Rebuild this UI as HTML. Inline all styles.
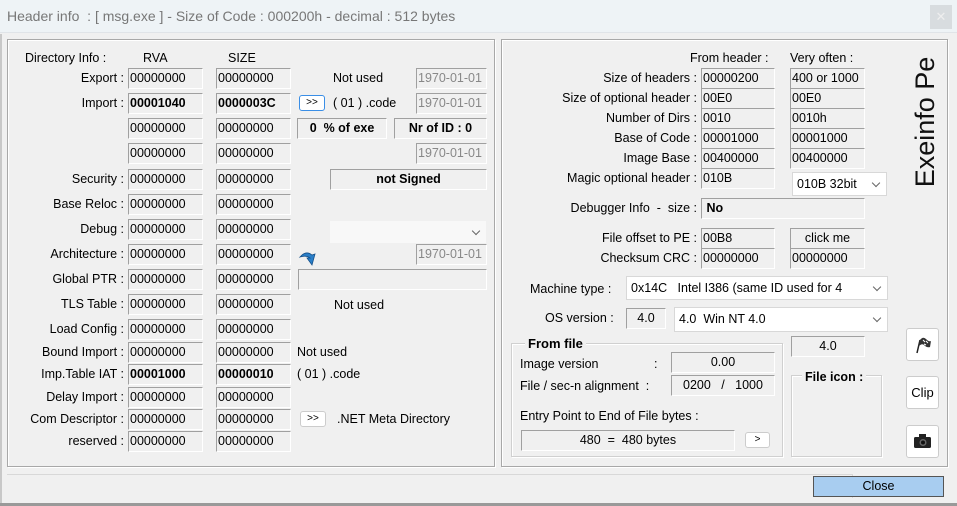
<!DOCTYPE html>
<html><head><meta charset="utf-8"><style>
*{margin:0;padding:0;box-sizing:border-box}
body{width:957px;height:506px;background:#f0f0f0;font-family:"Liberation Sans",sans-serif;font-size:12.5px;color:#000;position:relative;overflow:hidden}
.a{position:absolute;white-space:nowrap}
.f{position:absolute;border-top:1px solid #a0a0a0;border-left:1px solid #a0a0a0;border-right:1px solid #fff;border-bottom:1px solid #fff;height:21px;line-height:19px;padding-left:1px;white-space:nowrap;overflow:hidden}
.b{font-weight:bold}
.c{text-align:center;padding-left:0}
.g{color:#888}
.r{text-align:right}
.btn{position:absolute;background:#fff;border:1px solid #ccc;border-radius:3px;text-align:center}
.cb{position:absolute;background:#fff;border:1px solid #d8d8d8;height:24px;line-height:22px;padding-left:4px;white-space:nowrap;overflow:hidden}
.cb:after{content:"";position:absolute;right:7px;top:7px;width:5px;height:5px;border-right:1px solid #666;border-bottom:1px solid #666;transform:rotate(45deg)}
.grp{position:absolute;border:1px solid #d0d0d0;box-shadow:inset 1px 1px 0 #fff,1px 1px 0 #fff}
</style></head><body>
<div class="a" style="left:0;top:0;width:957px;height:33px;background:#eef3f6;border-bottom:1px solid #e0e4e8"></div>
<div class="a" style="left:7px;top:8px;font-size:14px;color:#777">Header info&nbsp; : [ msg.exe ] - Size of Code : 000200h - decimal : 512 bytes</div>
<div class="a" style="left:930px;top:5px;width:22px;height:24px;background:#d8dcdf;color:#eee;text-align:center;line-height:24px;font-size:13px">✕</div>
<div class="a" style="left:0;top:34px;width:2px;height:470px;background:#c8c8c8"></div>

<div class="grp" style="left:7px;top:39px;width:488px;height:428px;border-color:#a8a8a8"></div>
<div class="grp" style="left:501px;top:39px;width:447px;height:428px;border-color:#a8a8a8"></div>

<!-- left labels -->
<div class="a" style="left:25px;top:51px">Directory Info :</div>
<div class="a" style="left:143px;top:51px">RVA</div>
<div class="a" style="left:228px;top:51px">SIZE</div>
<div class="a r" style="left:0;width:124px;top:71px">Export :</div>
<div class="a r" style="left:0;width:124px;top:96px">Import :</div>
<div class="a r" style="left:0;width:124px;top:172px">Security :</div>
<div class="a r" style="left:0;width:124px;top:197px">Base Reloc :</div>
<div class="a r" style="left:0;width:124px;top:222px">Debug :</div>
<div class="a r" style="left:0;width:124px;top:247px">Architecture :</div>
<div class="a r" style="left:0;width:124px;top:272px">Global PTR :</div>
<div class="a r" style="left:0;width:124px;top:297px">TLS Table :</div>
<div class="a r" style="left:0;width:124px;top:322px">Load Config :</div>
<div class="a r" style="left:0;width:124px;top:345px">Bound Import :</div>
<div class="a r" style="left:0;width:124px;top:367px">Imp.Table IAT :</div>
<div class="a r" style="left:0;width:124px;top:390px">Delay Import :</div>
<div class="a r" style="left:0;width:124px;top:412px">Com Descriptor :</div>
<div class="a r" style="left:0;width:124px;top:434px">reserved :</div>

<div class="f" style="left:128px;top:68px;width:75px">00000000</div><div class="f" style="left:216px;top:68px;width:75px">00000000</div>
<div class="f b" style="left:128px;top:93px;width:75px">00001040</div><div class="f b" style="left:216px;top:93px;width:75px">0000003C</div>
<div class="f" style="left:128px;top:118px;width:75px">00000000</div><div class="f" style="left:216px;top:118px;width:75px">00000000</div>
<div class="f" style="left:128px;top:143px;width:75px">00000000</div><div class="f" style="left:216px;top:143px;width:75px">00000000</div>
<div class="f" style="left:128px;top:169px;width:75px">00000000</div><div class="f" style="left:216px;top:169px;width:75px">00000000</div>
<div class="f" style="left:128px;top:194px;width:75px">00000000</div><div class="f" style="left:216px;top:194px;width:75px">00000000</div>
<div class="f" style="left:128px;top:219px;width:75px">00000000</div><div class="f" style="left:216px;top:219px;width:75px">00000000</div>
<div class="f" style="left:128px;top:244px;width:75px">00000000</div><div class="f" style="left:216px;top:244px;width:75px">00000000</div>
<div class="f" style="left:128px;top:269px;width:75px">00000000</div><div class="f" style="left:216px;top:269px;width:75px">00000000</div>
<div class="f" style="left:128px;top:294px;width:75px">00000000</div><div class="f" style="left:216px;top:294px;width:75px">00000000</div>
<div class="f" style="left:128px;top:319px;width:75px">00000000</div><div class="f" style="left:216px;top:319px;width:75px">00000000</div>
<div class="f" style="left:128px;top:342px;width:75px">00000000</div><div class="f" style="left:216px;top:342px;width:75px">00000000</div>
<div class="f b" style="left:128px;top:364px;width:75px">00001000</div><div class="f b" style="left:216px;top:364px;width:75px">00000010</div>
<div class="f" style="left:128px;top:387px;width:75px">00000000</div><div class="f" style="left:216px;top:387px;width:75px">00000000</div>
<div class="f" style="left:128px;top:409px;width:75px">00000000</div><div class="f" style="left:216px;top:409px;width:75px">00000000</div>
<div class="f" style="left:128px;top:431px;width:75px">00000000</div><div class="f" style="left:216px;top:431px;width:75px">00000000</div>

<div class="a" style="left:333px;top:71px">Not used</div>
<div class="f g" style="left:416px;top:68px;width:71px">1970-01-01</div>
<div class="btn" style="left:299px;top:95px;width:26px;height:16px;border-color:#3a8ee6;font-size:10px;line-height:13px">&gt;&gt;</div>
<div class="a" style="left:333px;top:96px">( 01 ) .code</div>
<div class="f g" style="left:416px;top:93px;width:71px">1970-01-01</div>
<div class="f b c" style="left:297px;top:118px;width:90px">0 &nbsp;% of exe</div>
<div class="f b c" style="left:394px;top:118px;width:93px">Nr of ID : 0</div>
<div class="f g" style="left:416px;top:143px;width:71px">1970-01-01</div>
<div class="f b c" style="left:330px;top:169px;width:157px">not Signed</div>
<div class="cb" style="left:329px;top:220px;width:158px;background:#f8f8f8;border-color:#f0f0f0"></div>
<svg class="a" style="left:298px;top:249px" width="20" height="19" viewBox="0 0 20 19"><path d="M2 8 Q8 1 14 6 L17 5 L14 16 L9 9 L12 9 Q8 6 2 8Z" fill="#2a7fc8" stroke="#15508a" stroke-width="0.8"/></svg>
<div class="f g" style="left:416px;top:244px;width:71px">1970-01-01</div>
<div class="f" style="left:298px;top:269px;width:189px"></div>
<div class="a" style="left:334px;top:298px">Not used</div>
<div class="a" style="left:297px;top:345px">Not used</div>
<div class="a" style="left:297px;top:367px">( 01 ) .code</div>
<div class="btn" style="left:300px;top:411px;width:26px;height:16px;font-size:10px;line-height:13px">&gt;&gt;</div>
<div class="a" style="left:337px;top:412px">.NET Meta Directory</div>

<!-- right -->
<div class="a" style="left:690px;top:51px">From header :</div>
<div class="a" style="left:790px;top:51px">Very often :</div>
<div class="a r" style="left:500px;width:197px;top:71px">Size of headers :</div>
<div class="a r" style="left:500px;width:197px;top:91px">Size of optional header :</div>
<div class="a r" style="left:500px;width:197px;top:111px">Number of Dirs :</div>
<div class="a r" style="left:500px;width:197px;top:131px">Base of Code :</div>
<div class="a r" style="left:500px;width:197px;top:151px">Image Base :</div>
<div class="a r" style="left:500px;width:197px;top:171px">Magic optional header :</div>
<div class="f" style="left:701px;top:68px;width:74px">00000200</div><div class="f" style="left:790px;top:68px;width:75px">400 or 1000</div>
<div class="f" style="left:701px;top:88px;width:74px">00E0</div><div class="f" style="left:790px;top:88px;width:75px">00E0</div>
<div class="f" style="left:701px;top:108px;width:74px">0010</div><div class="f" style="left:790px;top:108px;width:75px">0010h</div>
<div class="f" style="left:701px;top:128px;width:74px">00001000</div><div class="f" style="left:790px;top:128px;width:75px">00001000</div>
<div class="f" style="left:701px;top:148px;width:74px">00400000</div><div class="f" style="left:790px;top:148px;width:75px">00400000</div>
<div class="f" style="left:701px;top:168px;width:74px;height:21px">010B</div>
<div class="cb" style="left:792px;top:172px;width:95px">010B 32bit</div>
<div class="a r" style="left:500px;width:197px;top:201px">Debugger Info &nbsp;- &nbsp;size :</div>
<div class="f b" style="left:701px;top:198px;width:164px">&nbsp;No</div>
<div class="a r" style="left:500px;width:197px;top:231px">File offset to PE :</div>
<div class="a r" style="left:500px;width:197px;top:251px">Checksum CRC :</div>
<div class="f" style="left:701px;top:228px;width:74px">00B8</div><div class="f c" style="left:790px;top:228px;width:75px">click me</div>
<div class="f" style="left:701px;top:248px;width:74px">00000000</div><div class="f" style="left:790px;top:248px;width:75px">00000000</div>
<div class="a" style="left:530px;top:282px">Machine type :</div>
<div class="cb" style="left:626px;top:276px;width:262px">0x14C &nbsp; Intel I386 (same ID used for 4</div>
<div class="a" style="left:545px;top:311px">OS version :</div>
<div class="f c" style="left:626px;top:308px;width:40px">4.0</div>
<div class="cb" style="left:674px;top:307px;width:214px;height:25px">4.0 &nbsp;Win NT 4.0</div>
<div class="f c" style="left:791px;top:336px;width:74px">4.0</div>
<div class="grp" style="left:511px;top:343px;width:272px;height:114px"></div>
<div class="a b" style="left:525px;top:336px;padding:0 3px;background:#f0f0f0;font-size:13px">From file</div>
<div class="a" style="left:520px;top:357px">Image version</div>
<div class="a" style="left:654px;top:357px">:</div>
<div class="f c" style="left:671px;top:352px;width:104px">0.00</div>
<div class="a" style="left:520px;top:379px">File / sec-n alignment &nbsp;:</div>
<div class="f c" style="left:671px;top:375px;width:104px">0200 &nbsp; / &nbsp; 1000</div>
<div class="a" style="left:520px;top:409px">Entry Point to End of File bytes :</div>
<div class="f c" style="left:521px;top:430px;width:214px">480 &nbsp;= &nbsp;480 bytes</div>
<div class="btn" style="left:745px;top:432px;width:25px;height:16px;font-size:10px;line-height:14px">&gt;</div>
<div class="grp" style="left:791px;top:375px;width:91px;height:82px"></div>
<div class="a b" style="left:802px;top:370px;padding:0 3px;background:#f0f0f0">File icon :</div>
<div class="a" style="left:850px;top:106px;width:150px;height:32px;line-height:32px;text-align:center;font-size:27px;transform:rotate(-90deg);color:#111">Exeinfo Pe</div>
<div class="btn" style="left:906px;top:328px;width:33px;height:33px">
<svg width="31" height="31" viewBox="0 0 31 31"><path d="M10 24 L13 11" stroke="#222" stroke-width="1.5"/><path d="M13 11 Q16 7 19 10 Q22 13 24 12 L23 18 Q20 19 17 16 Q15 14 12 17Z" fill="#333"/><path d="M16 11 L18 13 M19 12 L21 14 M17 15 L19 16" stroke="#fff" stroke-width="1"/></svg></div>
<div class="btn" style="left:906px;top:376px;width:33px;height:33px;line-height:31px;font-size:13px">Clip</div>
<div class="btn" style="left:906px;top:425px;width:33px;height:33px">
<svg width="31" height="31" viewBox="0 0 31 31"><rect x="7" y="11" width="17" height="11" rx="1.5" fill="#222"/><rect x="12" y="8" width="7" height="4" fill="#222"/><circle cx="16" cy="16.5" r="3.5" fill="#666"/><circle cx="16" cy="16.5" r="2" fill="#111"/></svg></div>

<div class="a" style="left:7px;top:474px;width:845px;height:1px;background:#d8d8d8"></div>
<div class="a" style="left:852px;top:474px;width:1px;height:24px;background:#d8d8d8"></div>
<div class="a" style="left:813px;top:476px;width:131px;height:21px;background:#a8cdf0;border:1px solid #555;text-align:center;line-height:19px">Close</div>
<div class="a" style="left:0;top:503px;width:957px;height:3px;background:#999"></div>
</body></html>
